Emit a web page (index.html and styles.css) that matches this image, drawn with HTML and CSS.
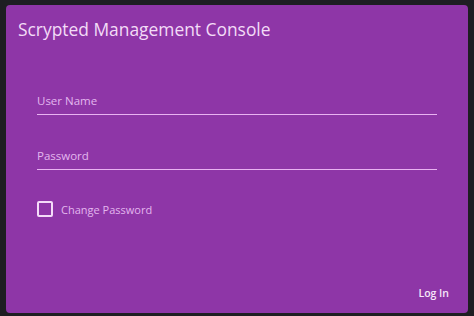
FILE: index.html
```html
<!DOCTYPE html>
<html lang="en">
  <head>
    <meta charset="UTF-8" />
    <meta name="viewport" content="width=device-width, initial-scale=1.0" />
    <title>Scrypted Management Console</title>
    <link rel="stylesheet" href="styles.css">
  </head>
  <body>
    <div class="card">
      <div class="card-title">Scrypted Management Console</div>
      <form class="login-form">
        <label class="field">
          <span class="field-label">User Name</span>
        </label>
        <label class="field">
          <span class="field-label">Password</span>
        </label>
        <label class="check">
          <span class="check-box"></span>
          <span class="check-label">Change Password</span>
        </label>
      </form>
      <div class="card-actions">
        <button type="button" class="btn-login">Log In</button>
      </div>
    </div>
  </body>
</html>
```

FILE: styles.css
```css
body {
  margin: 0;
  padding: 5px 6px 3px;
  background-color: #1e1e22;
  font-family: "Open Sans", sans-serif;
}
.card {
  height: 308px;
  box-sizing: border-box;
  background-color: #8e36a7;
  border-radius: 4px;
  display: flex;
  flex-direction: column;
}
.card-title {
  padding: 12px 12px 0;
  font-size: 17.4px;
  line-height: 24px;
  color: #f3dcf7;
}
.login-form {
  margin: 50px 31px 0;
  display: flex;
  flex-direction: column;
  gap: 31px;
}
.field {
  display: block;
  padding-bottom: 3px;
  border-bottom: 1px solid #e9b3f2;
}
.field-label {
  display: block;
  font-size: 11.5px;
  line-height: 20px;
  color: #e3b6ee;
}
.check {
  display: flex;
  align-items: center;
  gap: 8px;
  height: 16px;
}
.check-box {
  width: 16px;
  height: 16px;
  box-sizing: border-box;
  border: 2px solid #f4dcf8;
  border-radius: 2px;
}
.check-label {
  font-size: 11px;
  color: #e3b6ee;
}
.card-actions {
  margin-top: auto;
  padding: 0 19px 12px;
  display: flex;
  justify-content: flex-end;
}
.btn-login {
  background: none;
  border: none;
  padding: 0;
  font-family: inherit;
  font-size: 10.5px;
  font-weight: 600;
  line-height: 16px;
  color: #f6e6f9;
}
```
